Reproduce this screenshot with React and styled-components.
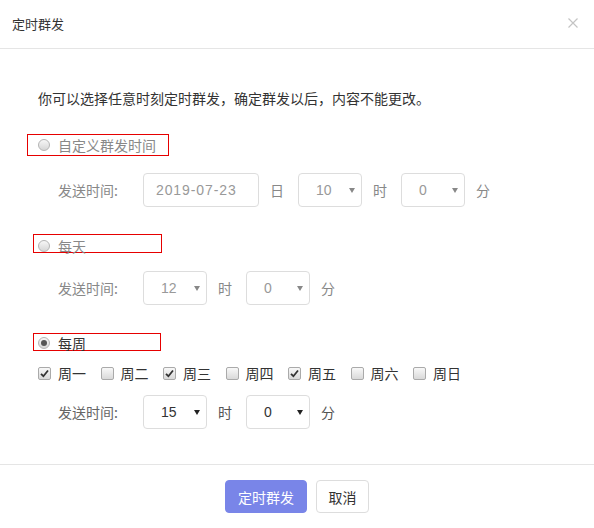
import React from "react";
import styled, { createGlobalStyle } from "styled-components";

const GlobalStyle = createGlobalStyle`
  body {
    margin: 0;
    background: #fff;
    font-family: "Noto Sans CJK SC", "Liberation Sans", sans-serif;
    color: #333;
  }
`;

const Dialog = styled.div`
  width: 594px;
  height: 528px;
  background: #fff;
  display: flex;
  flex-direction: column;
`;

const Header = styled.div`
  height: 48px;
  border-bottom: 1px solid #e5e5e5;
  display: flex;
  align-items: center;
  justify-content: space-between;
  padding: 0 16px 0 12px;
`;

const Title = styled.div`
  font-size: 13px;
  color: #333;
  line-height: 20px;
`;

const Close = styled.div`
  width: 10px;
  height: 10px;
  display: flex;
  margin-top: -2px;
`;

const Body = styled.div`
  flex: 1;
  display: flex;
  flex-direction: column;
  align-items: flex-start;
  padding-left: 27px;
`;

const Desc = styled.p`
  margin: 39px 0 0 11px;
  font-size: 14px;
  line-height: 20px;
  color: #333;
`;

const Choice = styled.div`
  box-sizing: border-box;
  margin: ${(p) => p.$top}px 0 0 ${(p) => p.$left}px;
  width: ${(p) => p.$width}px;
  height: ${(p) => p.$height}px;
  border: 1px solid #e60000;
  padding: ${(p) => p.$padTop}px 0 0 ${(p) => p.$pad}px;
  display: flex;
  align-items: flex-start;
`;

const Radio = styled.span`
  box-sizing: border-box;
  width: 12px;
  height: 12px;
  margin-top: 3px;
  border-radius: 50%;
  border: 1px solid #b4b4b4;
  background: linear-gradient(#f7f7f7, #d6d6d6);
  display: flex;
  align-items: center;
  justify-content: center;
  flex-shrink: 0;

  &::after {
    content: "";
    display: ${(p) => (p.$checked ? "block" : "none")};
    width: 6px;
    height: 6px;
    border-radius: 50%;
    background: #555;
  }
`;

const ChoiceText = styled.span`
  margin-left: 8px;
  font-size: 14px;
  line-height: 18px;
  white-space: nowrap;
  color: ${(p) => (p.$active ? "#333" : "#888")};
`;

const Row = styled.div`
  margin: ${(p) => p.$top}px 0 0 31px;
  height: 34px;
  display: flex;
  align-items: center;
  font-size: 14px;
`;

const Label = styled.span`
  width: 85px;
  color: ${(p) => (p.$active ? "#666" : "#888")};
`;

const DateBox = styled.div`
  box-sizing: border-box;
  width: 116px;
  height: 34px;
  border: 1px solid #ddd;
  border-radius: 4px;
  padding-left: 12px;
  display: flex;
  align-items: center;
  color: #999;
  font-family: "Liberation Sans", sans-serif;
  letter-spacing: 0.9px;
`;

const Unit = styled.span`
  margin: 0 14px 0 11px;
  color: ${(p) => (p.$active ? "#555" : "#888")};
`;

const SelectBox = styled.div`
  box-sizing: border-box;
  width: 64px;
  height: 34px;
  border: 1px solid #ddd;
  border-radius: 4px;
  padding-left: 17px;
  display: flex;
  align-items: center;
  position: relative;
  font-family: "Liberation Sans", sans-serif;
  color: ${(p) => (p.$active ? "#333" : "#999")};

  &::after {
    content: "";
    position: absolute;
    right: 6px;
    top: 14px;
    border-left: 3px solid transparent;
    border-right: 3px solid transparent;
    border-top: 5px solid ${(p) => (p.$active ? "#222" : "#888")};
  }
`;

const Days = styled.div`
  margin: 12px 0 0 11px;
  height: 20px;
  display: flex;
  align-items: center;
`;

const Day = styled.label`
  display: flex;
  align-items: center;
  margin-right: 14.5px;
  font-size: 14px;
  color: #333;
`;

const Check = styled.span`
  box-sizing: border-box;
  width: 13px;
  height: 13px;
  border: 1px solid #aaa;
  border-radius: 2px;
  background: linear-gradient(#f8f8f8, #d9d9d9);
  display: flex;
  align-items: center;
  justify-content: center;
  margin-right: 7px;
`;

const Footer = styled.div`
  border-top: 1px solid #e5e5e5;
  margin-top: 35px;
  padding: 15px 0;
  display: flex;
  justify-content: center;
  gap: 9px;
`;

const Button = styled.button`
  box-sizing: border-box;
  width: ${(p) => p.$width}px;
  height: 33px;
  padding: 0;
  border-radius: 4px;
  font-family: "Noto Sans CJK SC", sans-serif;
  font-size: 14px;
  border: 1px solid ${(p) => (p.$primary ? "#7985e8" : "#ddd")};
  background: ${(p) => (p.$primary ? "#7985e8" : "#fff")};
  color: ${(p) => (p.$primary ? "#fff" : "#333")};
`;

const Select = ({ value, active }) => <SelectBox $active={active}>{value}</SelectBox>;

const days = [
  ["周一", true],
  ["周二", false],
  ["周三", true],
  ["周四", false],
  ["周五", true],
  ["周六", false],
  ["周日", false],
];

const TimeRow = ({ top, hour, active }) => (
  <Row $top={top}>
    <Label $active={active}>发送时间:</Label>
    <Select value={hour} active={active} />
    <Unit $active={active}>时</Unit>
    <Select value="0" active={active} />
    <Unit $active={active}>分</Unit>
  </Row>
);

export default function App() {
  return (
    <>
      <GlobalStyle />
      <Dialog>
        <Header>
          <Title>定时群发</Title>
          <Close>
            <svg width="10" height="10" viewBox="0 0 10 10">
              <path d="M0.5 0.5L9.5 9.5M9.5 0.5L0.5 9.5" stroke="#c4c4c4" strokeWidth="1.2" />
            </svg>
          </Close>
        </Header>
        <Body>
          <Desc>你可以选择任意时刻定时群发，确定群发以后，内容不能更改。</Desc>

          <Choice $top={26} $left={0} $width={142} $height={22} $pad={10} $padTop={1}>
            <Radio />
            <ChoiceText>自定义群发时间</ChoiceText>
          </Choice>
          <Row $top={17}>
            <Label>发送时间:</Label>
            <DateBox>2019-07-23</DateBox>
            <Unit>日</Unit>
            <Select value="10" />
            <Unit>时</Unit>
            <Select value="0" />
            <Unit>分</Unit>
          </Row>

          <Choice $top={27} $left={6} $width={129} $height={19} $pad={4} $padTop={2}>
            <Radio />
            <ChoiceText>每天</ChoiceText>
          </Choice>
          <TimeRow top={18} hour="12" />

          <Choice $top={28} $left={6} $width={128} $height={18} $pad={4} $padTop={0}>
            <Radio $checked />
            <ChoiceText $active>每周</ChoiceText>
          </Choice>
          <Days>
            {days.map(([name, on]) => (
              <Day key={name}>
                <Check>
                  {on && (
                    <svg width="9" height="9" viewBox="0 0 9 9">
                      <path d="M1 4.8L3.4 7.2L8 1.5" fill="none" stroke="#333" strokeWidth="1.8" />
                    </svg>
                  )}
                </Check>
                {name}
              </Day>
            ))}
          </Days>
          <TimeRow top={12} hour="15" active />
        </Body>
        <Footer>
          <Button $primary $width={82}>定时群发</Button>
          <Button $width={53}>取消</Button>
        </Footer>
      </Dialog>
    </>
  );
}
